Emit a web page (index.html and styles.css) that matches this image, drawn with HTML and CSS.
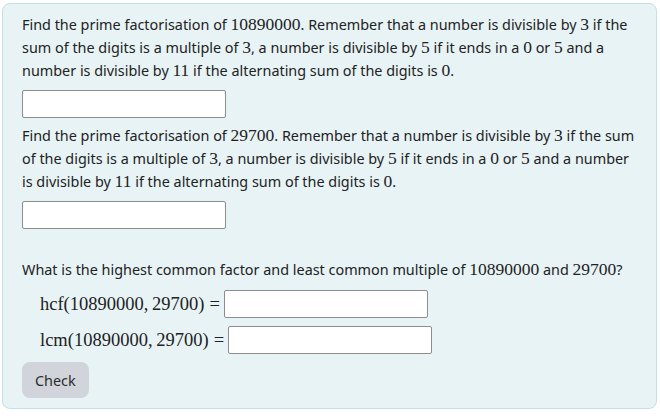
FILE: index.html
```html
<!DOCTYPE html>
<html>
<head>
<meta charset="utf-8">
<link rel="stylesheet" href="styles.css">
</head>
<body>
<div class="card">
  <p class="q"><span class="ln">Find the prime factorisation of <span class="m">10890000</span>. Remember that a number is divisible by <span class="m">3</span> if the</span> <span class="ln">sum of the digits is a multiple of <span class="m">3</span>, a number is divisible by <span class="m">5</span> if it ends in a <span class="m">0</span> or <span class="m">5</span> and a</span> <span class="ln">number is divisible by <span class="m">11</span> if the alternating sum of the digits is <span class="m">0</span>.</span></p>
  <input class="ans" type="text">
  <p class="q q2"><span class="ln">Find the prime factorisation of <span class="m">29700</span>. Remember that a number is divisible by <span class="m">3</span> if the sum</span> <span class="ln">of the digits is a multiple of <span class="m">3</span>, a number is divisible by <span class="m">5</span> if it ends in a <span class="m">0</span> or <span class="m">5</span> and a number</span> <span class="ln">is divisible by <span class="m">11</span> if the alternating sum of the digits is <span class="m">0</span>.</span></p>
  <input class="ans" type="text">
  <p class="q q3">What is the highest common factor and least common multiple of <span class="m">10890000</span> and <span class="m">29700</span>?</p>
  <div class="rows">
    <div class="row"><span class="m eq">hcf(10890000,&#8201;29700)<span class="rel">=</span></span><input class="ans" type="text"></div>
    <div class="row"><span class="m eq">lcm(10890000,&#8201;29700)<span class="rel">=</span></span><input class="ans" type="text"></div>
  </div>
  <button class="check" type="button">Check</button>
</div>
</body>
</html>
```
FILE: styles.css
```css
html, body {
  margin: 0;
  padding: 0;
  background: #ffffff;
}
body {
  padding: 3px 0 0 2px;
  font-family: "Noto Sans", "Open Sans", sans-serif;
  font-size: 14.4px;
  color: #222222;
}
.card {
  box-sizing: border-box;
  width: 655px;
  height: 406px;
  border: 1px solid #c3dfe7;
  border-radius: 8px;
  background: #e8f3f6;
  padding: 9px 19px 10px 19px;
  display: flex;
  flex-direction: column;
  align-items: flex-start;
}
.q {
  margin: 0;
  line-height: 23px;
  white-space: nowrap;
}
.ln {
  display: block;
}
.q2 {
  margin-top: 6px;
}
.q3 {
  margin-top: 29px;
}
.m {
  font-family: "Liberation Serif", serif;
  font-size: 17.5px;
  line-height: 1;
}
.ans {
  box-sizing: border-box;
  width: 204px;
  height: 28px;
  margin: 8px 0 0 0;
  border: 1px solid #8d8d8d;
  border-radius: 2px;
  background: #ffffff;
  padding: 0 6px;
  font: inherit;
}
.rows {
  display: flex;
  flex-direction: column;
  gap: 8px;
  margin: 9px 0 0 18px;
}
.row {
  display: flex;
  align-items: center;
  gap: 4px;
}
.row .eq {
  font-size: 18.5px;
}
.row .ans {
  margin: 0;
}
.rel {
  margin-left: 5px;
}
.check {
  margin-top: 8px;
  height: 36px;
  padding: 0 13px;
  border: none;
  border-radius: 8px;
  background: #d1d5db;
  color: #2b2b2b;
  font-family: "Noto Sans", "Open Sans", sans-serif;
  font-size: 14.4px;
}
```
